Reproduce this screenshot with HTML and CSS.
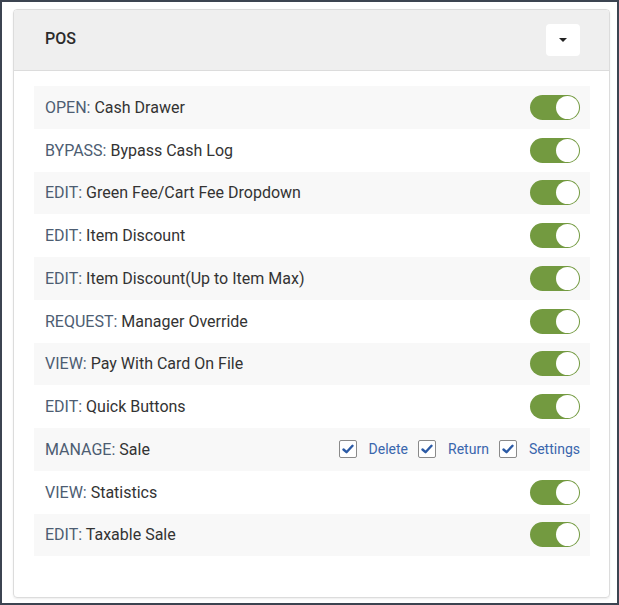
FILE: index.html
```html
<!DOCTYPE html>
<html lang="en">
<head>
  <meta charset="UTF-8">
  <meta name="viewport" content="width=device-width, initial-scale=1.0">
  <title>POS Permissions</title>
  <link rel="stylesheet" href="styles.css">
</head>
<body>

  <div class="card">
    <div class="card-header">
      <h2>POS</h2>
      <button class="caret-btn"><span class="caret"></span></button>
    </div>

    <div class="perm-list">
      <div class="perm-row">
        <span class="perm-name"><span class="verb">OPEN:</span> Cash Drawer</span>
        <span class="toggle"><span class="knob"></span></span>
      </div>
      <div class="perm-row">
        <span class="perm-name"><span class="verb">BYPASS:</span> Bypass Cash Log</span>
        <span class="toggle"><span class="knob"></span></span>
      </div>
      <div class="perm-row">
        <span class="perm-name"><span class="verb">EDIT:</span> Green Fee/Cart Fee Dropdown</span>
        <span class="toggle"><span class="knob"></span></span>
      </div>
      <div class="perm-row">
        <span class="perm-name"><span class="verb">EDIT:</span> Item Discount</span>
        <span class="toggle"><span class="knob"></span></span>
      </div>
      <div class="perm-row">
        <span class="perm-name"><span class="verb">EDIT:</span> Item Discount(Up to Item Max)</span>
        <span class="toggle"><span class="knob"></span></span>
      </div>
      <div class="perm-row">
        <span class="perm-name"><span class="verb">REQUEST:</span> Manager Override</span>
        <span class="toggle"><span class="knob"></span></span>
      </div>
      <div class="perm-row">
        <span class="perm-name"><span class="verb">VIEW:</span> Pay With Card On File</span>
        <span class="toggle"><span class="knob"></span></span>
      </div>
      <div class="perm-row">
        <span class="perm-name"><span class="verb">EDIT:</span> Quick Buttons</span>
        <span class="toggle"><span class="knob"></span></span>
      </div>
      <div class="perm-row">
        <span class="perm-name"><span class="verb">MANAGE:</span> Sale</span>
        <div class="checks">
          <label class="check"><span class="box"><svg viewBox="0 0 12 12" width="12" height="12"><path d="M1.5 6.5 L4.5 9.2 L10.5 2.8" fill="none" stroke="#2c5ba6" stroke-width="2.4" stroke-linecap="round" stroke-linejoin="round"/></svg></span>Delete</label>
          <label class="check"><span class="box"><svg viewBox="0 0 12 12" width="12" height="12"><path d="M1.5 6.5 L4.5 9.2 L10.5 2.8" fill="none" stroke="#2c5ba6" stroke-width="2.4" stroke-linecap="round" stroke-linejoin="round"/></svg></span>Return</label>
          <label class="check"><span class="box"><svg viewBox="0 0 12 12" width="12" height="12"><path d="M1.5 6.5 L4.5 9.2 L10.5 2.8" fill="none" stroke="#2c5ba6" stroke-width="2.4" stroke-linecap="round" stroke-linejoin="round"/></svg></span>Settings</label>
        </div>
      </div>
      <div class="perm-row">
        <span class="perm-name"><span class="verb">VIEW:</span> Statistics</span>
        <span class="toggle"><span class="knob"></span></span>
      </div>
      <div class="perm-row">
        <span class="perm-name"><span class="verb">EDIT:</span> Taxable Sale</span>
        <span class="toggle"><span class="knob"></span></span>
      </div>
    </div>
  </div>

</body>
</html>
```

FILE: styles.css
```css
html {
  height: 100%;
}

body {
  font-family: Roboto, "Liberation Sans", Arial, sans-serif;
  margin: 0;
  height: 100%;
  box-sizing: border-box;
  border: 2px solid #3c4451;
  background-color: #fff;
  color: #333;
  padding: 7px 7px 5px 11px;
}

.card {
  height: 100%;
  box-sizing: border-box;
  border: 1px solid #dcdcdc;
  border-radius: 4px;
  box-shadow: 0 1px 2px rgba(0, 0, 0, 0.08);
  overflow: hidden;
}

.card-header {
  display: flex;
  justify-content: space-between;
  align-items: center;
  height: 61px;
  box-sizing: border-box;
  padding: 0 29px 0 31px;
  background-color: #efefef;
  border-bottom: 1px solid #dcdcdc;
}

.card-header h2 {
  margin: 0 0 3px;
  font-size: 16px;
  font-weight: 500;
  color: #2b2b2b;
}

.caret-btn {
  width: 34px;
  height: 32px;
  border: none;
  border-radius: 4px;
  background-color: #fff;
  display: flex;
  justify-content: center;
  align-items: center;
  padding: 0;
  margin-bottom: 1px;
}

.caret {
  width: 0;
  height: 0;
  border-left: 4px solid transparent;
  border-right: 4px solid transparent;
  border-top: 4px solid #222;
}

.perm-list {
  padding: 15px 19px 0 20px;
}

.perm-row {
  display: flex;
  justify-content: space-between;
  align-items: center;
  height: 42.75px;
  padding: 0 10px 0 11px;
  font-size: 16px;
  color: #333;
}

.perm-row:nth-child(odd) {
  background-color: #f8f8f8;
}

.verb {
  color: #4d5d72;
}

.toggle {
  position: relative;
  width: 50px;
  height: 25px;
  border-radius: 13px;
  background-color: #739a40;
}

.knob {
  position: absolute;
  top: 1px;
  right: 1px;
  width: 23px;
  height: 23px;
  border-radius: 50%;
  background-color: #fff;
}

.checks {
  display: flex;
  align-items: center;
  gap: 10px;
}

.check {
  display: flex;
  align-items: center;
  gap: 12px;
  font-size: 14px;
  color: #3a66ad;
}

.box {
  width: 16px;
  height: 16px;
  border: 1px solid #8a8a8a;
  border-radius: 2px;
  background-color: #fff;
  display: flex;
  justify-content: center;
  align-items: center;
}
```
